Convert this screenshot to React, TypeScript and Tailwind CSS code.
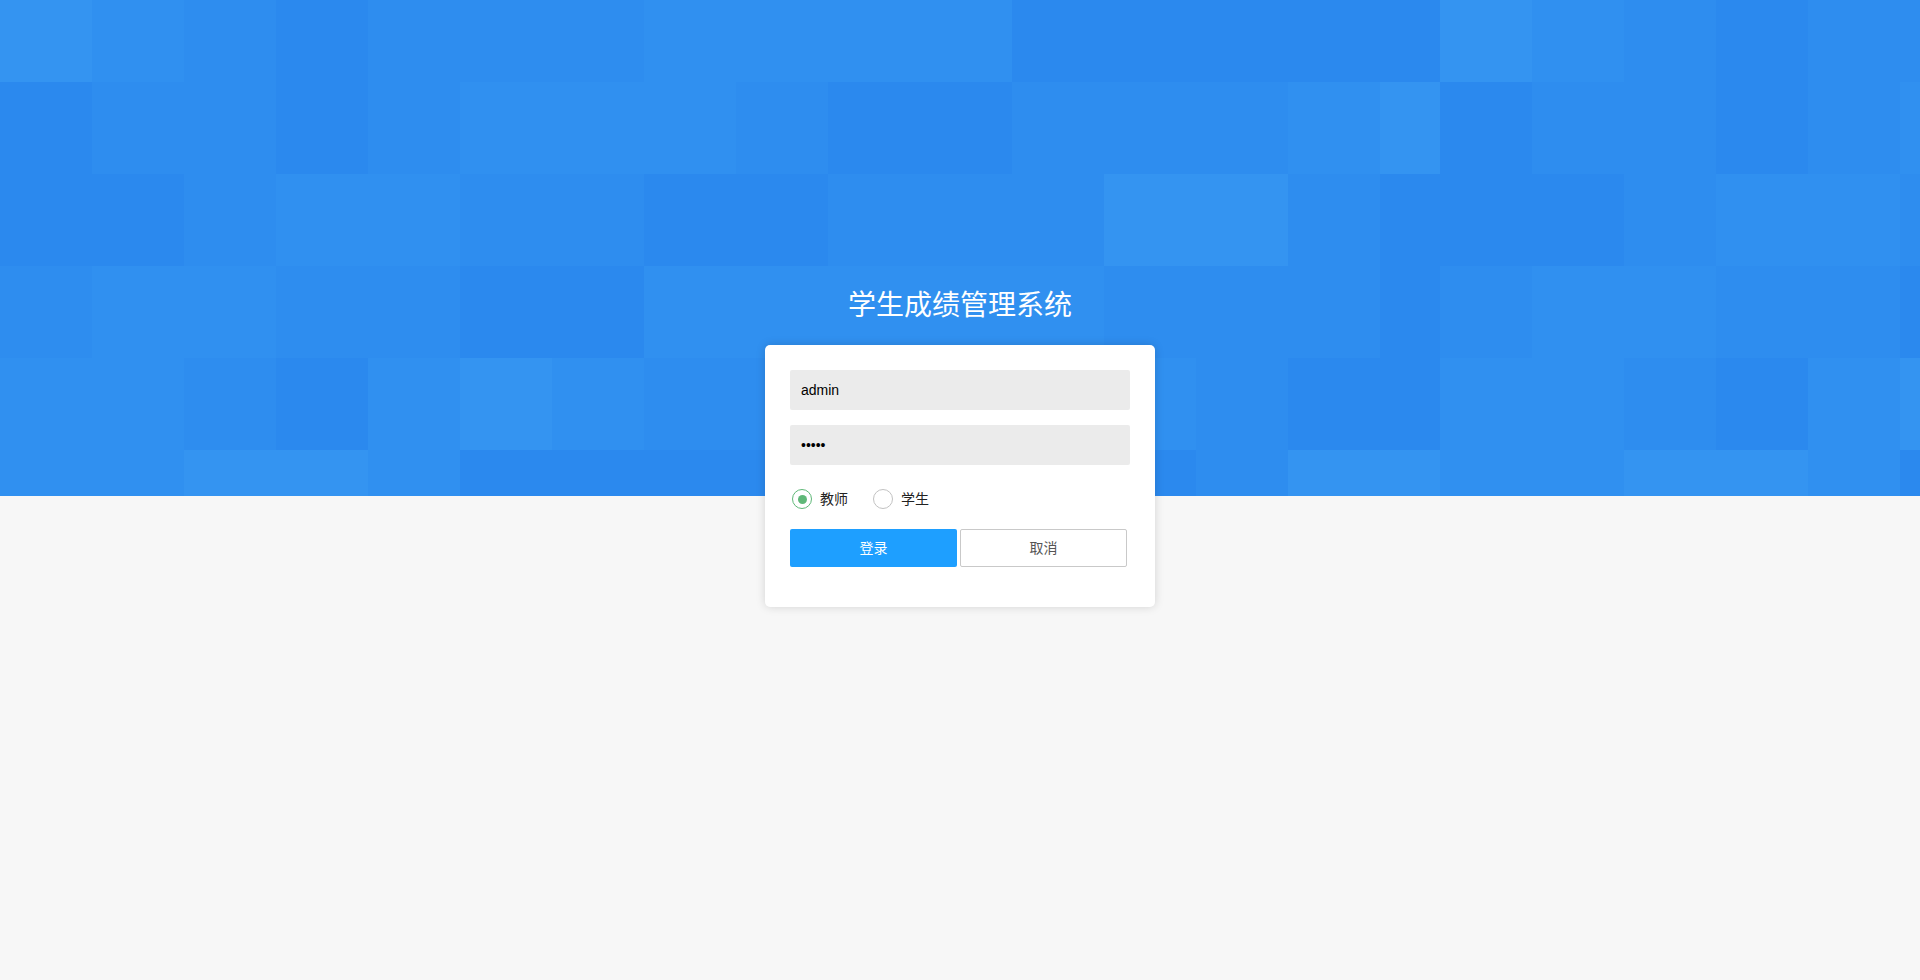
import React from "react";

// Mosaic shades, lightest to darkest
const SHADES: Record<string, string> = {
  L: "#3494f1",
  A: "#3090f0",
  B: "#2e8def",
  C: "#2b89ee",
};

// One 1440px-wide block of the mosaic: 6 rows x 16 columns (last column 60px wide)
const MOSAIC = [
  "LABCBBBAAAACCCCC",
  "CBBCBAAABCCBBBAL",
  "CCBAABBCCBBBLLBC",
  "BAABBCCAAAAABBBC",
  "AABCALABBBBBABCC",
  "AALLACCCCCCCCBLL",
];
const ROW_Y = [0, 82, 174, 266, 358, 450];
const ROW_H = [82, 92, 92, 92, 92, 46];
const BLOCK_W = 1440;
const TILE = 92;

function MosaicBackground() {
  const rects: React.ReactNode[] = [];
  for (let rep = 0; rep < 2; rep++) {
    MOSAIC.forEach((row, r) => {
      row.split("").forEach((key, c) => {
        const x = rep * BLOCK_W + c * TILE;
        const w = c === 15 ? BLOCK_W - 15 * TILE : TILE;
        if (x >= 1920) return;
        rects.push(
          <rect
            key={`${rep}-${r}-${c}`}
            x={x}
            y={ROW_Y[r]}
            width={w}
            height={ROW_H[r]}
            fill={SHADES[key]}
          />
        );
      });
    });
  }
  return (
    <svg
      className="absolute inset-0 h-full w-full"
      viewBox="0 0 1920 496"
      preserveAspectRatio="none"
      aria-hidden="true"
    >
      {rects}
    </svg>
  );
}

function Radio({ label, checked }: { label: string; checked?: boolean }) {
  return (
    <label className="flex h-[28px] items-center gap-[8px] cursor-pointer">
      <span
        className={
          checked
            ? "flex h-[20px] w-[20px] items-center justify-center rounded-full border-[1.5px] border-[#5fb878]"
            : "flex h-[20px] w-[20px] items-center justify-center rounded-full border-[1.5px] border-[#c2c2c2]"
        }
      >
        {checked && <span className="h-[9px] w-[9px] rounded-full bg-[#5fb878]" />}
      </span>
      <span className="text-[14px] text-[#222]">{label}</span>
    </label>
  );
}

export default function App() {
  return (
    <div
      className="min-h-[980px] bg-[#f7f7f7]"
      style={{ fontFamily: '"Liberation Sans", "Noto Sans CJK SC", sans-serif' }}
    >
      <header className="relative h-[496px]">
        <MosaicBackground />
        <div className="relative z-10 flex flex-col items-center pt-[291px]">
          <h1 className="text-[28px] leading-[30px] font-normal text-white">
            学生成绩管理系统
          </h1>
          <form
            className="mt-[24px] w-[390px] rounded-[5px] bg-white px-[25px] pt-[25px] pb-[40px] shadow-[0_0_10px_rgba(0,0,0,0.15)]"
            onSubmit={(e) => e.preventDefault()}
          >
            <input
              type="text"
              defaultValue="admin"
              className="block h-[40px] w-full rounded-[2px] bg-[#ebebeb] pl-[11px] text-[14px] text-black outline-none"
            />
            <input
              type="password"
              defaultValue="12345"
              className="mt-[15px] block h-[40px] w-full rounded-[2px] bg-[#ebebeb] pl-[11px] text-[14px] text-black outline-none"
            />
            <div className="mt-[20px] flex items-center gap-[25px] pl-[2px]">
              <Radio label="教师" checked />
              <Radio label="学生" />
            </div>
            <div className="mt-[16px] flex gap-[3px]">
              <button
                type="submit"
                className="h-[38px] w-[167px] rounded-[2px] bg-[#1e9fff] text-[14px] text-white"
              >
                登录
              </button>
              <button
                type="button"
                className="h-[38px] w-[167px] rounded-[2px] border border-[#c9c9c9] bg-white text-[14px] text-[#555]"
              >
                取消
              </button>
            </div>
          </form>
        </div>
      </header>
    </div>
  );
}
